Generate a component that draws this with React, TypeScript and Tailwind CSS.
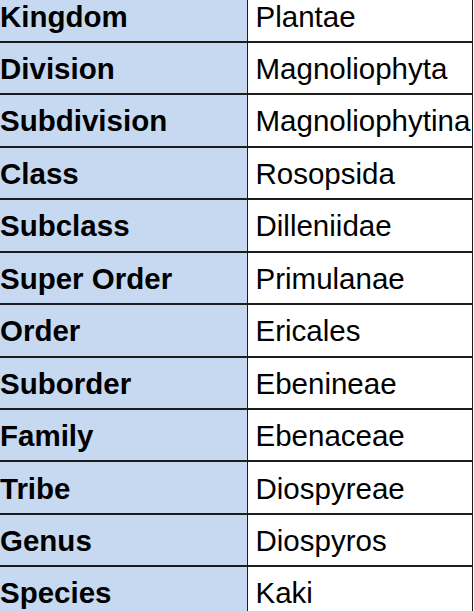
const ROWS = [
  ["Kingdom", "Plantae"],
  ["Division", "Magnoliophyta"],
  ["Subdivision", "Magnoliophytina"],
  ["Class", "Rosopsida"],
  ["Subclass", "Dilleniidae"],
  ["Super Order", "Primulanae"],
  ["Order", "Ericales"],
  ["Suborder", "Ebenineae"],
  ["Family", "Ebenaceae"],
  ["Tribe", "Diospyreae"],
  ["Genus", "Diospyros"],
  ["Species", "Kaki"],
];

export default function App() {
  return (
    <div className="w-[474px] h-[611px] overflow-hidden bg-white text-black font-['Liberation_Sans',Arial,sans-serif] text-[29.5px]">
      <div className="-mt-[11.5px] flex flex-col">
        {ROWS.map(([rank, name]) => (
          <div
            key={rank}
            className="flex h-[52.44px] w-[473px] border-t-2 border-[#1c1c1c]"
          >
            <div className="w-[247.5px] shrink-0 flex items-center pt-[2px] bg-[#c6d9f1] border-r-[1.5px] border-[#1c1c1c] font-bold whitespace-nowrap">
              {rank}
            </div>
            <div className="w-[225.5px] shrink-0 flex items-center pt-[2px] pl-[8px] border-r-[1.5px] border-[#1c1c1c] whitespace-nowrap">
              {name}
            </div>
          </div>
        ))}
      </div>
    </div>
  );
}
